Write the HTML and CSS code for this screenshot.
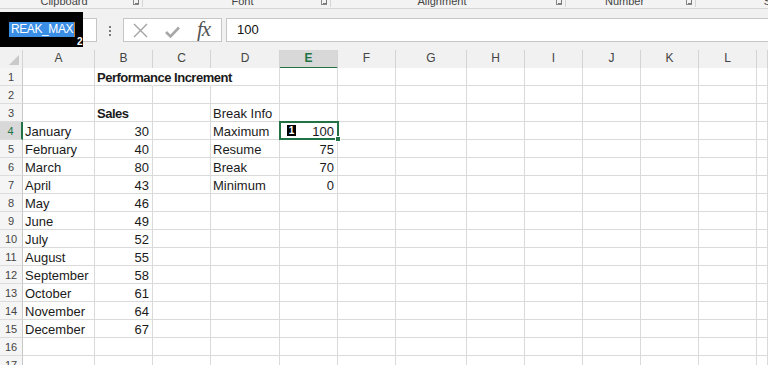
FILE: index.html
```html
<!DOCTYPE html>
<html>
<head>
<meta charset="utf-8">
<link rel="stylesheet" href="styles.css">
</head>
<body>
<div class="ribbon">
  <div class="grp g1"><span class="lbl">Clipboard</span><span class="launch"></span></div>
  <div class="grp g2"><span class="lbl">Font</span><span class="launch"></span></div>
  <div class="grp g3"><span class="lbl">Alignment</span><span class="launch"></span></div>
  <div class="grp g4"><span class="lbl">Number</span><span class="launch"></span></div>
  <div class="grp g5"><span class="lbl">S</span></div>
</div>
<div class="band"></div>
<div class="fbar">
  <div class="namebox"></div>
  <div class="dots"><i></i><i></i><i></i></div>
  <div class="fxbox">
    <svg class="ico-x" width="15" height="15" viewBox="0 0 15 15"><path d="M1 1 L14 14 M14 1 L1 14" stroke="#a3a3a3" stroke-width="1.4" fill="none"/></svg>
    <svg class="ico-ok" width="15" height="12" viewBox="0 0 15 12"><path d="M1 6 L5.5 10.5 L14 1.5" stroke="#a8a8a8" stroke-width="2.6" fill="none"/></svg>
    <span class="fx">fx</span>
  </div>
  <div class="finput">100</div>
</div>
<div class="gap"></div>
<div class="hdr">
  <div class="corner"><span class="tri"></span></div>
  <div>A</div><div>B</div><div>C</div><div>D</div><div class="sel">E</div><div>F</div><div>G</div><div>H</div><div>I</div><div>J</div><div>K</div><div>L</div><div></div>
</div>
<div class="sheet">
  <div class="r"><div class="h">1</div><div></div><div class="b nor flow">Performance Increment</div><div class="nor"></div><div></div><div></div><div></div><div></div><div></div><div></div><div></div><div></div><div></div><div></div></div>
  <div class="r"><div class="h">2</div><div></div><div></div><div></div><div></div><div></div><div></div><div></div><div></div><div></div><div></div><div></div><div></div><div></div></div>
  <div class="r"><div class="h">3</div><div></div><div class="b">Sales</div><div></div><div>Break Info</div><div></div><div></div><div></div><div></div><div></div><div></div><div></div><div></div><div></div></div>
  <div class="r"><div class="h hsel">4</div><div>January</div><div class="n">30</div><div></div><div>Maximum</div><div class="n active"><span class="badge">1</span>100<span class="selbox"><span class="handle"></span></span></div><div></div><div></div><div></div><div></div><div></div><div></div><div></div><div></div></div>
  <div class="r"><div class="h">5</div><div>February</div><div class="n">40</div><div></div><div>Resume</div><div class="n">75</div><div></div><div></div><div></div><div></div><div></div><div></div><div></div><div></div></div>
  <div class="r"><div class="h">6</div><div>March</div><div class="n">80</div><div></div><div>Break</div><div class="n">70</div><div></div><div></div><div></div><div></div><div></div><div></div><div></div><div></div></div>
  <div class="r"><div class="h">7</div><div>April</div><div class="n">43</div><div></div><div>Minimum</div><div class="n">0</div><div></div><div></div><div></div><div></div><div></div><div></div><div></div><div></div></div>
  <div class="r"><div class="h">8</div><div>May</div><div class="n">46</div><div></div><div></div><div></div><div></div><div></div><div></div><div></div><div></div><div></div><div></div><div></div></div>
  <div class="r"><div class="h">9</div><div>June</div><div class="n">49</div><div></div><div></div><div></div><div></div><div></div><div></div><div></div><div></div><div></div><div></div><div></div></div>
  <div class="r"><div class="h">10</div><div>July</div><div class="n">52</div><div></div><div></div><div></div><div></div><div></div><div></div><div></div><div></div><div></div><div></div><div></div></div>
  <div class="r"><div class="h">11</div><div>August</div><div class="n">55</div><div></div><div></div><div></div><div></div><div></div><div></div><div></div><div></div><div></div><div></div><div></div></div>
  <div class="r"><div class="h">12</div><div>September</div><div class="n">58</div><div></div><div></div><div></div><div></div><div></div><div></div><div></div><div></div><div></div><div></div><div></div></div>
  <div class="r"><div class="h">13</div><div>October</div><div class="n">61</div><div></div><div></div><div></div><div></div><div></div><div></div><div></div><div></div><div></div><div></div><div></div></div>
  <div class="r"><div class="h">14</div><div>November</div><div class="n">64</div><div></div><div></div><div></div><div></div><div></div><div></div><div></div><div></div><div></div><div></div><div></div></div>
  <div class="r"><div class="h">15</div><div>December</div><div class="n">67</div><div></div><div></div><div></div><div></div><div></div><div></div><div></div><div></div><div></div><div></div><div></div></div>
  <div class="r"><div class="h">16</div><div></div><div></div><div></div><div></div><div></div><div></div><div></div><div></div><div></div><div></div><div></div><div></div><div></div></div>
  <div class="r"><div class="h">17</div><div></div><div></div><div></div><div></div><div></div><div></div><div></div><div></div><div></div><div></div><div></div><div></div><div></div></div>
</div>
<div class="keytip">
  <span class="nbtext">REAK_MAX</span><span class="caret"></span><span class="kt2">2</span>
</div>
</body>
</html>
```
FILE: styles.css
```css
* { box-sizing: border-box; }
body {
  margin: 0;
  width: 768px;
  height: 365px;
  overflow: hidden;
  background: #f1f1f1;
  font-family: "Liberation Sans", Arial, sans-serif;
  position: relative;
}
.ribbon {
  height: 9px;
  display: flex;
  overflow: hidden;
  border-bottom: 1px solid #d6d6d6;
  background: #f3f3f3;
}
.grp {
  position: relative;
  display: flex;
  justify-content: center;
  border-right: 1px solid #d6d6d6;
  height: 7px;
  overflow: visible;
}
.g1 { width: 143px; }
.g2 { width: 188px; }
.g3 { width: 235px; }
.g4 { width: 130px; }
.g5 { flex: 1; border-right: none; justify-content: flex-end; }
.lbl {
  font-size: 11px;
  line-height: 11px;
  color: #444;
  margin-top: -4px;
  white-space: nowrap;
}
.g1 .lbl { margin-right: 14px; }
.g2 .lbl { margin-left: 12px; }
.g3 .lbl { margin-right: 12px; }
.g4 .lbl { margin-right: 12px; }
.g5 .lbl { margin-right: -3px; }
.launch {
  position: absolute;
  right: 3px;
  top: 0;
  width: 6px;
  height: 5px;
  border-left: 1px solid #888;
  border-bottom: 1px solid #888;
}
.launch::after {
  content: "";
  position: absolute;
  left: 1px;
  top: 0;
  width: 3px;
  height: 3px;
  border-right: 1px solid #777;
  border-bottom: 1px solid #777;
}
.band { height: 9px; }
.fbar {
  display: flex;
  height: 24px;
}
.namebox {
  width: 97px;
  background: #fff;
  border: 1px solid #c6c6c6;
}
.dots {
  width: 26px;
  display: flex;
  flex-direction: column;
  align-items: center;
  justify-content: center;
  gap: 2px;
  padding-top: 1px;
}
.dots i {
  width: 2px;
  height: 2px;
  background: #7a7a7a;
}
.fxbox {
  width: 99px;
  background: #fff;
  border: 1px solid #c6c6c6;
  display: flex;
  align-items: center;
  padding-left: 9px;
}
.ico-x { margin-right: 17px; }
.ico-ok { margin-right: 17px; margin-top: 3px; }
.fx {
  font-family: "Liberation Serif", "Times New Roman", serif;
  font-style: italic;
  font-size: 21px;
  color: #555;
  letter-spacing: -1px;
  margin-top: -2px;
}
.finput {
  flex: 1;
  margin-left: 4px;
  background: #fff;
  border: 1px solid #c6c6c6;
  border-right: none;
  font-size: 13px;
  line-height: 22px;
  padding-left: 10px;
  color: #111;
}
.gap { height: 8px; }
.hdr, .r {
  display: grid;
  grid-template-columns: 23px 72px 58px 58px 69px 58px 58px 71px 58px 58px 58px 58px 58px 11px;
  height: 18px;
}
.hdr > div {
  border-right: 1px solid #d4d4d4;
  border-bottom: 1px solid #c8c8c8;
  font-size: 12px;
  color: #444;
  text-align: center;
  line-height: 17px;
}
.hdr .sel {
  background: #d8d8d8;
  color: #217346;
  border-bottom: 2px solid #217346;
  font-weight: bold;
}
.corner { position: relative; }
.tri {
  position: absolute;
  right: 3px;
  bottom: 3px;
  width: 0;
  height: 0;
  border-left: 10px solid transparent;
  border-bottom: 10px solid #c9c9c9;
}
.sheet { background: #fff; }
.r > div {
  position: relative;
  border-right: 1px solid #dadada;
  border-bottom: 1px solid #dadada;
  background: #fff;
  font-size: 13px;
  line-height: 19px;
  height: 18px;
  padding-left: 2px;
  color: #1a1a1a;
  white-space: nowrap;
}
.r > .h {
  background: #f5f5f5;
  border-right: 1px solid #c8c8c8;
  border-bottom: 1px solid #dcdcdc;
  color: #444;
  font-size: 11px;
  text-align: center;
  padding-left: 0;
}
.r > .hsel {
  background: #d8d8d8;
  color: #217346;
  border-right: 2px solid #217346;
}
.r > .n { text-align: right; padding-right: 3px; }
.r > .b { font-weight: bold; letter-spacing: -0.5px; }
.r > .nor { border-right-color: #fff; }
.r > .flow { overflow: visible; z-index: 2; }
.badge {
  position: absolute;
  left: 7px;
  top: 3px;
  width: 9px;
  height: 11px;
  background: #000;
  color: #fff;
  font-size: 10px;
  font-weight: bold;
  line-height: 11px;
  text-align: center;
}
.selbox {
  position: absolute;
  left: -1px;
  top: -1px;
  right: -2px;
  bottom: -1px;
  border: 2px solid #217346;
  z-index: 3;
}
.handle {
  position: absolute;
  right: -4px;
  bottom: -4px;
  width: 6px;
  height: 6px;
  background: #217346;
  border: 1px solid #fff;
}
.keytip {
  position: absolute;
  left: 0;
  top: 12px;
  width: 83px;
  height: 35px;
  background: #000;
}
.nbtext {
  position: absolute;
  left: 9px;
  top: 10px;
  height: 15px;
  width: 65px;
  background: #3a8ee6;
  color: #fff;
  font-size: 12px;
  letter-spacing: -0.4px;
  line-height: 15px;
  padding-left: 2px;
  white-space: nowrap;
}
.caret {
  position: absolute;
  left: 74px;
  top: 10px;
  width: 1px;
  height: 15px;
  background: #c47a2c;
}
.kt2 {
  position: absolute;
  left: 77px;
  top: 25px;
  color: #fff;
  font-size: 10px;
  font-weight: bold;
  line-height: 10px;
}
```
